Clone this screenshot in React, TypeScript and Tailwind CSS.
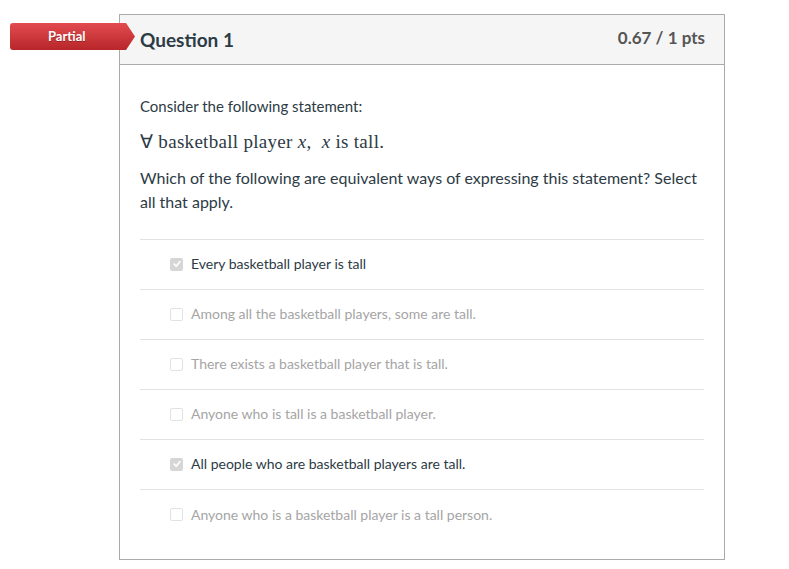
const options = [
  { label: "Every basketball player is tall", checked: true },
  { label: "Among all the basketball players, some are tall.", checked: false },
  { label: "There exists a basketball player that is tall.", checked: false },
  { label: "Anyone who is tall is a basketball player.", checked: false },
  { label: "All people who are basketball players are tall.", checked: true },
  { label: "Anyone who is a basketball player is a tall person.", checked: false },
];

function Checkbox({ checked }: { checked: boolean }) {
  if (checked) {
    return (
      <span className="w-[13px] h-[13px] rounded-[2px] bg-[#d6d6d6] flex items-center justify-center shrink-0">
        <svg viewBox="0 0 12 12" className="w-[10px] h-[10px]" fill="none" stroke="#ffffff" strokeWidth={2} strokeLinecap="round" strokeLinejoin="round">
          <path d="M2.5 6.2 L5 8.6 L9.5 3.2" />
        </svg>
      </span>
    );
  }
  return <span className="w-[13px] h-[13px] rounded-[2px] border border-[#e2e2e2] bg-white shrink-0"></span>;
}

export default function App() {
  return (
    <div className="min-h-screen bg-white pt-[14px] pl-[119px] font-['Lato','Noto_Sans',sans-serif]">
      <div className="relative w-[606px] h-[546px] border border-[#aaaaaa]">
        {/* Result badge */}
        <div className="absolute left-[-110px] top-[8px] w-[125px] h-[27px] flex items-center pl-[38px] text-white text-[13px] font-bold bg-gradient-to-b from-[#e24b4f] to-[#b8252a] rounded-l-[3px] [clip-path:polygon(0_0,116px_0,125px_50%,116px_100%,0_100%)] [text-shadow:0_1px_0_rgba(0,0,0,0.3)]">
          Partial
        </div>

        {/* Header */}
        <div className="h-[50px] bg-[#f5f5f5] border-b border-[#aaaaaa] flex items-start justify-between pl-[20px] pr-[19px]">
          <h2 className="text-[19px] font-bold text-[#2d3b45] mt-[11px]">Question 1</h2>
          <div className="text-[17px] font-bold text-[#555555] mt-[10px]">0.67 / 1 pts</div>
        </div>

        {/* Body */}
        <div className="px-[20px] pt-[30px]">
          <p className="text-[15px] text-[#2d3b45] leading-[22px]">Consider the following statement:</p>
          <p className="mt-[13px] text-[19px] tracking-[0.3px] text-[#2d3b45] leading-[24px] font-['Liberation_Serif',serif]">
            ∀ basketball player <i>x</i>,&nbsp; <i>x</i> is tall.
          </p>
          <p className="mt-[12px] text-[16px] text-[#2d3b45] leading-[24px]">
            Which of the following are equivalent ways of expressing this statement? Select all that apply.
          </p>

          <div className="mt-[25px] border-t border-[#e2e2e2]">
            {options.map((o, i) => (
              <div
                key={i}
                className={`h-[50px] flex items-center gap-[8px] pl-[30px] pb-[1px] ${i < options.length - 1 ? "border-b border-[#e2e2e2]" : ""}`}
              >
                <Checkbox checked={o.checked} />
                <span className={`text-[14px] leading-[18px] ${o.checked ? "text-[#2d3b45]" : "text-[#a5a5a5]"}`}>{o.label}</span>
              </div>
            ))}
          </div>
        </div>
      </div>
    </div>
  );
}
